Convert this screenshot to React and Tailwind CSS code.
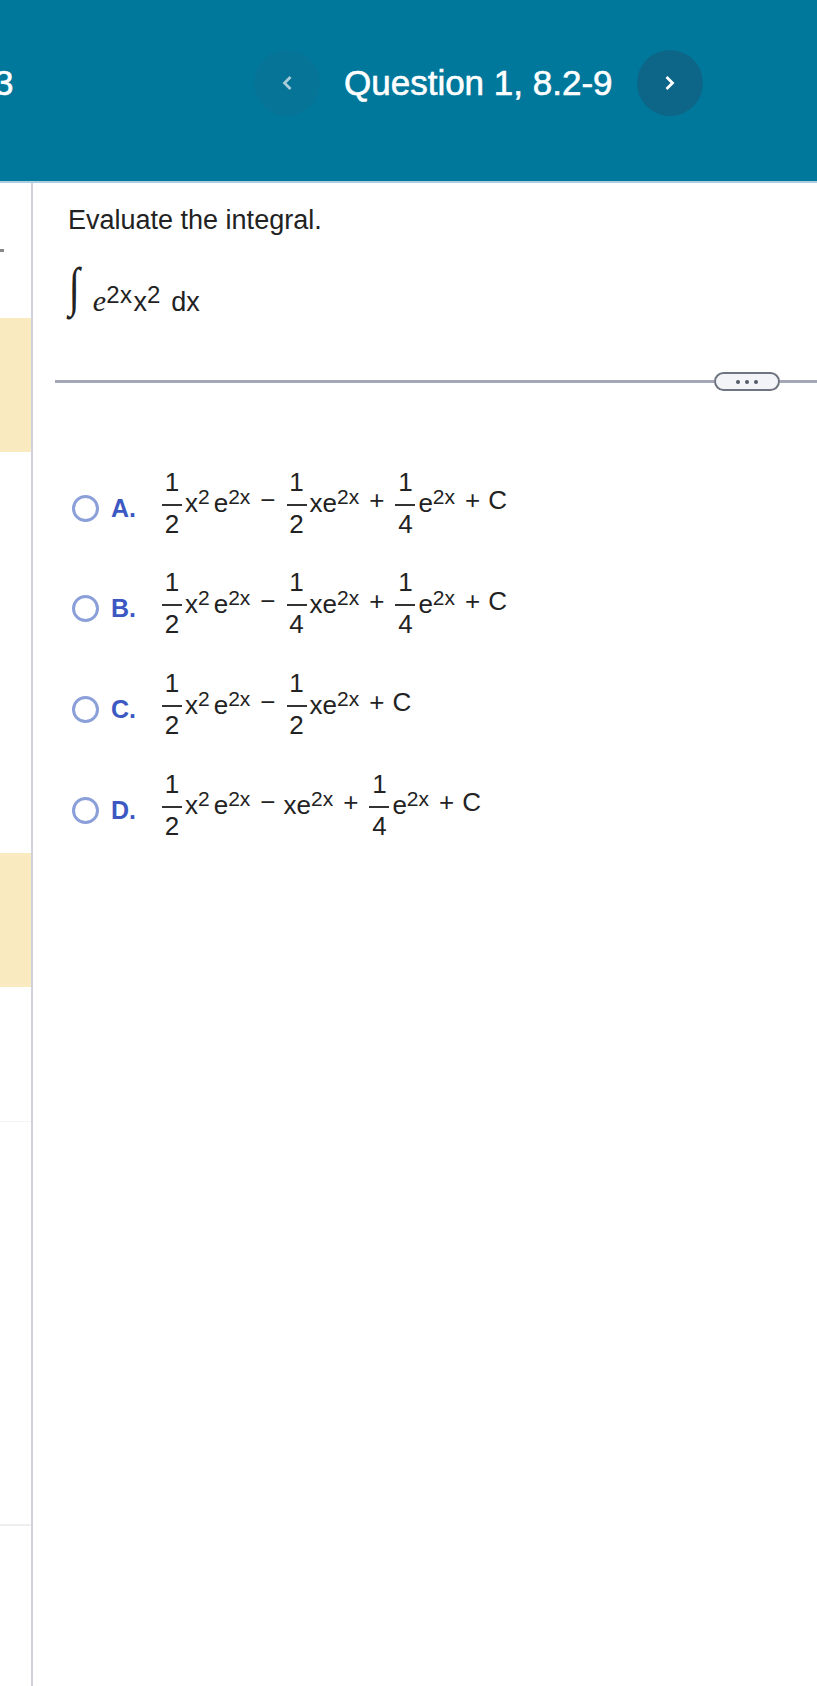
import React from 'react';

const SANS = "font-['Liberation_Sans',Arial,sans-serif]";

const Sup = ({ children, className = '' }) => (
  <span className={`text-[21px] align-[8px] ${className}`}>{children}</span>
);

const Frac = ({ n, d }) => (
  <span className="inline-flex flex-col items-center w-[20px] mx-[3px] mb-[2px] text-[26px] leading-[37px]">
    <span className="h-[40px]">{n}</span>
    <span className="w-full h-[2px] bg-[#333]" />
    <span className="h-[37px]">{d}</span>
  </span>
);

const T = ({ children, className = '' }) => (
  <span className={`whitespace-pre text-[26px] leading-[30px] ${className}`}>{children}</span>
);

// inline math sits a little above the middle of the fractions
const M = ({ children, className = '' }) => <T className={`mb-[8px] ${className}`}>{children}</T>;

const X2E2X = () => (
  <M>x<Sup>2</Sup><span className="ml-[4px]">e</span><Sup>2x</Sup></M>
);
const XE2X = () => (
  <M>xe<Sup>2x</Sup></M>
);
const E2X = () => (
  <M>e<Sup>2x</Sup></M>
);
const Op = ({ children }) => <M className="ml-[10px] mr-[8px]">{children}</M>;

const OPTIONS = [
  {
    label: 'A.',
    math: (
      <>
        <Frac n="1" d="2" /><X2E2X /><Op>−</Op><Frac n="1" d="2" /><XE2X /><Op>+</Op><Frac n="1" d="4" /><E2X /><Op>+</Op><M>C</M>
      </>
    ),
  },
  {
    label: 'B.',
    math: (
      <>
        <Frac n="1" d="2" /><X2E2X /><Op>−</Op><Frac n="1" d="4" /><XE2X /><Op>+</Op><Frac n="1" d="4" /><E2X /><Op>+</Op><M>C</M>
      </>
    ),
  },
  {
    label: 'C.',
    math: (
      <>
        <Frac n="1" d="2" /><X2E2X /><Op>−</Op><Frac n="1" d="2" /><XE2X /><Op>+</Op><M>C</M>
      </>
    ),
  },
  {
    label: 'D.',
    math: (
      <>
        <Frac n="1" d="2" /><X2E2X /><Op>−</Op><XE2X /><Op>+</Op><Frac n="1" d="4" /><E2X /><Op>+</Op><M>C</M>
      </>
    ),
  },
];

export default function App() {
  return (
    <div className={`${SANS} h-[1686px] w-[817px] overflow-hidden bg-white text-[#222]`}>
      {/* Header */}
      <header className="h-[183px] bg-[#00789c] border-b-[2px] border-[#a9cfe0] flex items-center text-white pb-[15px] overflow-hidden">
        <span className="-ml-[6px] w-[19px] text-[35px] [-webkit-text-stroke:0.6px_white]">3</span>
        <button className="ml-[241px] w-[66px] h-[66px] rounded-full bg-[#067496] flex items-center justify-center">
          <svg width="12" height="18" viewBox="0 0 12 18" fill="none" stroke="#a9ccdb" strokeWidth="2.8">
            <path d="M9.5 3 L3.5 9 L9.5 15" />
          </svg>
        </button>
        <h1 className="ml-[24px] w-[269px] whitespace-nowrap text-[35px] font-normal [-webkit-text-stroke:0.6px_white]">Question 1, 8.2-9</h1>
        <button className="ml-[24px] w-[66px] h-[66px] rounded-full bg-[#0d6687] flex items-center justify-center">
          <svg width="12" height="18" viewBox="0 0 12 18" fill="none" stroke="#ffffff" strokeWidth="2.8">
            <path d="M2.5 3 L8.5 9 L2.5 15" />
          </svg>
        </button>
      </header>

      <div className="flex">
        {/* Left rail */}
        <aside className="w-[33px] h-[1503px] shrink-0 border-r-[2px] border-[#cfd2dc]">
          <div className="mt-[66px] w-[4px] h-[3px] bg-[#888]" />
          <div className="mt-[66px] h-[134px] bg-[#f9ebbf]" />
          <div className="mt-[401px] h-[134px] bg-[#f9ebbf]" />
          <div className="mt-[134px] h-px bg-[#f4f4f4]" />
          <div className="mt-[402px] h-[2px] bg-[#efefef]" />
        </aside>

        {/* Question */}
        <main className="flex-1 min-w-0">
          <p className="ml-[35px] mt-[20px] text-[27px] leading-[34px]">Evaluate the integral.</p>
          <div className="ml-[34px] mt-[20px] h-[62px] flex items-center">
            <span className="font-['Liberation_Serif',serif] text-[54px] leading-[62px] scale-x-75 -mt-[2px]">∫</span>
            <T className="ml-[11px] mt-[21px] text-[27px]">
              <span className="font-['Liberation_Serif',serif] italic text-[30px]">e</span>
              <Sup className="text-[24px] tracking-[0.5px]">2x</Sup><span className="ml-[1px]">x</span><Sup className="text-[24px]">2</Sup><span className="ml-[11px]">dx</span>
            </T>
          </div>

          <div className="ml-[22px] mt-[53px] flex items-center">
            <div className="w-[659px] h-[3px] bg-[#a3a7b6]" />
            <div className="w-[66px] h-[19px] rounded-full border-[2px] border-[#6f7580] bg-[#f2f4f8] flex items-center justify-center gap-[5px] shrink-0">
              <span className="w-[4px] h-[4px] rounded-full bg-[#555b66]" />
              <span className="w-[4px] h-[4px] rounded-full bg-[#555b66]" />
              <span className="w-[4px] h-[4px] rounded-full bg-[#555b66]" />
            </div>
            <div className="flex-1 h-[3px] bg-[#a3a7b6]" />
          </div>

          <ul className="mt-[67px] ml-[4px]">
            {OPTIONS.map(o => (
              <li key={o.label} className="h-[100.67px] flex items-center">
                <span className="ml-[35px] w-[27px] h-[27px] rounded-full border-[3px] border-[#8b9fd9] shrink-0" />
                <span className="ml-[12px] w-[49px] text-[25px] font-bold text-[#3c58c2]">{o.label}</span>
                <span className="flex items-center text-[#222] -ml-[1px] mb-[8px]">{o.math}</span>
              </li>
            ))}
          </ul>
        </main>
      </div>
    </div>
  );
}
